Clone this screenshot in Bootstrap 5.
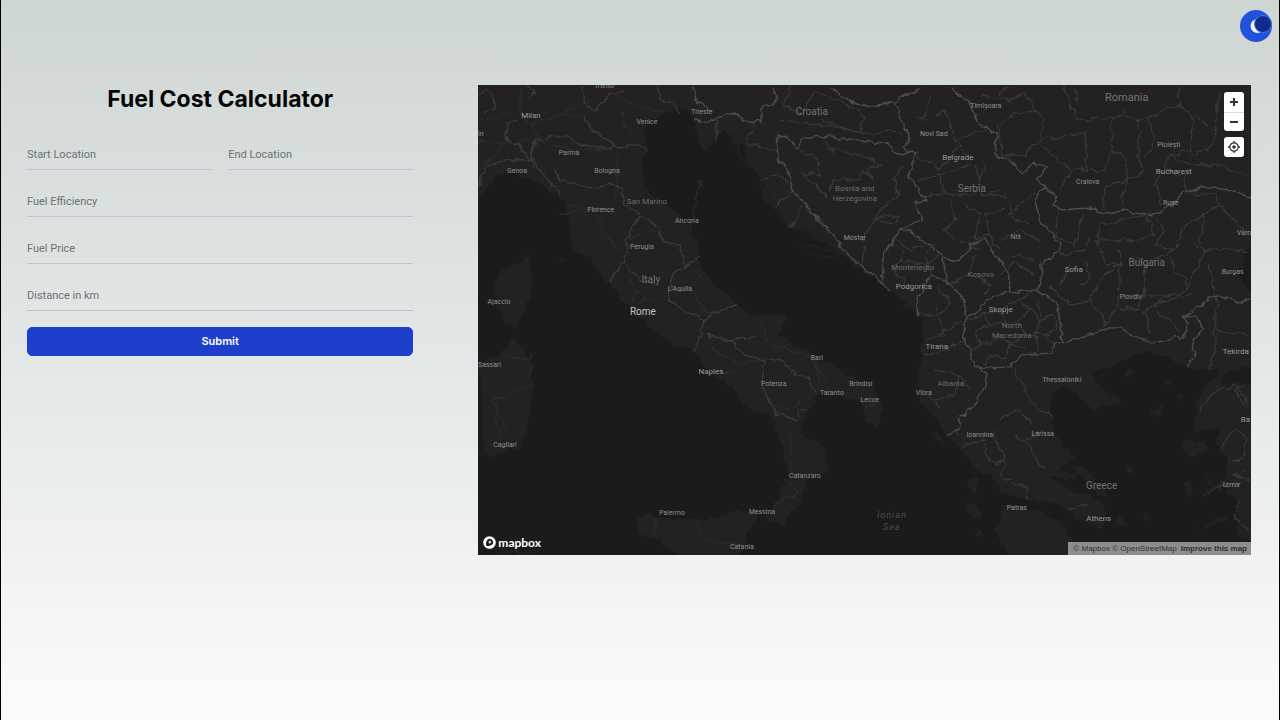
<!DOCTYPE html>
<html lang="en">
<head>
<meta charset="utf-8">
<meta name="viewport" content="width=device-width, initial-scale=1">
<title>Fuel Cost Calculator</title>
<link href="https://cdn.jsdelivr.net/npm/bootstrap@5.3.0/dist/css/bootstrap.min.css" rel="stylesheet">
<style>
  body {
    font-family: Inter, "Liberation Sans", sans-serif;
    background: linear-gradient(#ced6d4, #e3e7e7 50%, #fafafa 97%) no-repeat #fafafa;
    border: solid #000;
    border-width: 0 1px;
  }
  .top-bar { padding: 10px 7px 0; height: 85px; }
  .theme-toggle { width: 32px; height: 32px; }
  .planner { padding: 0 28px 0 26px; display: grid; gap: 32px; }
  @media (min-width: 768px) {
    .planner { grid-template-columns: 1fr 2fr; gap: 65px; }
  }
  .page-title { font-size: 23px; line-height: 28px; margin-bottom: 28px; font-weight: 700; color: #050707; }
  .fields { gap: 18px; }
  .form-floating > .line-input, .form-floating > .line-input:focus {
    height: 29px; min-height: 29px; padding: 0; font: 11px/28px Roboto, "Liberation Sans", sans-serif; color: #333b42;
    background: transparent; border: 0; border-bottom: 1px solid #bcc6cb; border-radius: 0; box-shadow: none;
  }
  .form-floating > .line-input:focus { border-color: #1f3ecb; }
  .form-floating > .line-label {
    height: 28px; padding: 0; border: 0; font: 11px/28px Roboto, "Liberation Sans", sans-serif; color: #6b7275;
  }
  .form-floating > .line-input:focus ~ .line-label,
  .form-floating > .line-input:not(:placeholder-shown) ~ .line-label { transform: translateY(-18px); }
  .btn-submit {
    --bs-btn-bg: #1f3ecb; --bs-btn-border-color: #1f3ecb; --bs-btn-color: #fff;
    --bs-btn-hover-bg: #1a35b0; --bs-btn-hover-color: #fff;
    height: 29px; margin-top: 16px; padding: 0; font-size: 11px; font-weight: 600; border-radius: 5px;
  }
  .map-view { aspect-ratio: 773 / 470; background: #1b1b1b; }
  .map-tools { top: 7px; right: 7px; gap: 6px; }
  .tool-group { width: 20px; border-radius: 3px; }
  .tool-group button { height: 20px; }
  .tool-group button + button { height: 19px; border-top: 1px solid #ddd !important; }
  .map-brand { left: 5px; bottom: 4px; gap: 2px; font: 700 12px/16px Lato, sans-serif; }
  .map-credit {
    right: 0; bottom: 0; height: 13px; padding: 0 4px 0 5px; gap: 4px;
    background: #8d8d8d; font: 8px/13px "Liberation Sans", sans-serif;
  }
  .map-credit a { color: #303030; }
  .map-svg text { font-family: Roboto, "Noto Sans", sans-serif; text-anchor: middle; }
  .city { font-size: 7px; fill: #8e8e8e; }
  .city-lg { font-size: 8px; fill: #999; }
  .capital { font-size: 10px; fill: #c0c0c0; }
  .land-name { font-size: 8px; fill: #6c6c6c; }
  .land-name-lg { font-size: 10px; fill: #727272; }
  .map-svg .from-start { text-anchor: start; }
  .sea-name { font-size: 9px; fill: #4d4d4d; font-style: italic; letter-spacing: 1px; }
</style>
</head>
<body class="min-vh-100">
<header class="top-bar d-flex justify-content-end align-items-start">
  <button type="button" class="theme-toggle btn p-0 border-0 rounded-circle d-flex" aria-label="Toggle dark mode">
    <svg width="32" height="32" viewBox="0 0 32 32" aria-hidden="true">
      <circle cx="16" cy="16" r="16" fill="#2451d9"/>
      <circle cx="17.500" cy="16" r="7" fill="#f2f6ff"/>
      <circle cx="23" cy="14" r="8.500" fill="#102b8d" stroke="#4775df"/>
    </svg>
  </button>
</header>

<main class="planner">
  <section>
    <h1 class="page-title text-center">Fuel Cost Calculator</h1>
    <form>
      <div class="fields d-flex flex-column">
        <div class="d-flex gap-3">
          <div class="form-floating w-50">
            <input id="start" class="form-control line-input" type="text" placeholder=" ">
            <label class="line-label" for="start">Start Location</label>
          </div>
          <div class="form-floating w-50">
            <input id="end" class="form-control line-input" type="text" placeholder=" ">
            <label class="line-label" for="end">End Location</label>
          </div>
        </div>
        <div class="form-floating">
          <input id="eff" class="form-control line-input" type="text" placeholder=" ">
          <label class="line-label" for="eff">Fuel Efficiency</label>
        </div>
        <div class="form-floating">
          <input id="price" class="form-control line-input" type="text" placeholder=" ">
          <label class="line-label" for="price">Fuel Price</label>
        </div>
        <div class="form-floating">
          <input id="dist" class="form-control line-input" type="text" placeholder=" ">
          <label class="line-label" for="dist">Distance in km</label>
        </div>
      </div>
      <button type="submit" class="btn btn-submit w-100">Submit</button>
    </form>
  </section>

  <section class="map-view position-relative overflow-hidden" aria-label="Map">
    <svg class="map-svg d-block w-100 h-100" viewBox="478 85 773 470" preserveAspectRatio="xMidYMid slice">
      <defs>
        <filter id="rough" filterUnits="userSpaceOnUse" x="470" y="77" width="790" height="486" color-interpolation-filters="sRGB">
          <feTurbulence type="fractalNoise" baseFrequency="0.11" numOctaves="2" seed="4"/>
          <feDisplacementMap in="SourceGraphic" scale="8" xChannelSelector="R" yChannelSelector="G"/>
        </filter>
      </defs>
      <g filter="url(#rough)">
        <g fill="#222">
          <!-- mainland: Italy, the Balkans, Greece and western Turkey -->
          <path d="M470 77V203L480 197 488 186 497 177 507 172 517 174 530 180 545 187 557 194 563 202 567 215 570 232 572 245 575 251 588 257 597 268 604 280 615 288 622 302 632 312 645 320 650 328 665 338 674 346 690 347 695 350 702 362 712 370 715 378 723 381 735 386 738 397 743 405 752 412 768 413 775 425 783 448 787 467 790 480 783 487 777 490 780 495 773 507 767 518 768 523 783 525 790 512 802 503 804 485 808 477 828 472 826 458 825 447 810 440 801 432 805 418 815 400 820 395 840 397 857 400 863 407 867 422 877 427 880 415 883 408 880 400 873 387 857 378 843 373 830 363 810 353 780 337 780 330 789 318 787 314 763 315 750 313 737 305 717 287 703 272 700 260 697 240 693 237 683 218 670 208 652 195 643 180 642 160 647 152 647 140 642 130 657 117 673 110 690 110 694 120 700 143 705 153 717 137 725 130 733 140 745 147 747 163 760 177 763 197 773 208 787 227 807 233 833 247 847 260 863 272 880 283 897 297 912 310 922 320 923 340 923 357 918 382 920 402 933 413 943 432 960 448 977 472 993 477 1000 492 1027 500 1053 503 1070 512 1080 520 1100 530 1107 512 1097 498 1080 495 1050 477 1080 480 1075 474 1057 470 1077 458 1063 445 1053 432 1050 415 1053 393 1067 387 1080 397 1092 409 1117 403 1100 387 1093 373 1117 363 1140 352 1170 357 1187 368 1220 370 1210 383 1197 403 1193 432 1220 428 1217 445 1230 465 1223 480 1203 493 1223 488 1237 498 1240 515 1237 535 1260 550V77Z"/>
          <path d="M1003 505 1000 522 995 532 1007 552V563H1075L1070 538 1063 523 1040 512 1020 507Z"/>
          <path d="M528 247 531 277 530 297 523 313 515 330 503 320 498 307 495 283 500 272 520 262 527 258Z"/>
          <path d="M513 338 525 350 533 370 530 407 529 420 522 448 503 452 493 458 485 452 482 415 479 360 500 355Z"/>
          <path d="M637 518 647 512 657 518 690 520 717 518 737 512 762 512 748 532 745 542 740 560H690L670 550 653 538 640 535Z"/>
          <path d="M970 478l8-2-2 18-6-4zM965 503l12 2 4 14-9-1zM974 529l9 6-5 2zM932 430l8 4 5 12-7-4zM1072 466l12 2 22 24 6 8-14-6zM1112 520l10-4 5 10-8-2zM1140 512l8 4 0 8zM1126 465l7 4 2 6-6-2zM1150 411l13-4-2 9-8 0zM1126 369l8 2-2 9-7-3zM1164 382l10 0-4 4zM1176 398l8-5-1 8zM1183 442l20-2 6 10-16 8-10-6zM1184 484l7-3 2 12-6 4zM1206 477l7 4-2 7zM1196 531l20-12 14-2-22 12zM555 258l10 1-3 4zM1108 393l10 4 4 8-9-5z"/>
          <path d="M733 137 745 165M760 177 785 222M800 227 832 243M800 245 845 252M806 254 840 260M500 553 535 553" stroke="#202020" stroke-width="3"/>
        </g>
        <g fill="#1b1b1b">
          <path d="M1223 375 1235 371 1260 363V388L1235 382 1223 385Z"/>
          <path d="M1260 240 1246 250 1243 268 1240 276 1247 288 1260 298Z"/>
        </g>
        <!-- roads and minor boundaries in Italy and on the islands -->
        <g fill="none" stroke="#2d2d2d" stroke-width="1.2">
          <path d="M478 142 515 143 530 141M520 87 520 110 530 125 560 115 585 118 600 135M550 145 580 150 640 146M617 155 617 195M605 90 640 107 665 112M620 108 630 135M560 215 600 208M598 215 605 235 620 250M567 205 615 212M640 235 625 240M505 355 530 360M495 400 530 385M495 400 500 440M530 355 532 375M492 395 505 430M695 520 705 540 740 545M655 520 655 535M478 120 510 115M530 125 545 145M560 115 590 100M480 170 510 140M700 180 690 230M650 230 680 250"/>
          <path d="M700 275 690 290 710 315M630 280 645 300 660 300M640 290C625 300 640 310 645 295M712 350 740 365 765 358M735 370 720 375M760 320 770 345 790 350 815 360 830 395M815 360 820 385M790 430 792 470M865 410 875 400M770 400 790 410 800 400M785 480 800 492 775 505"/>
        </g>
        <!-- regional boundaries in the Balkans -->
        <g fill="none" stroke="#393939" stroke-width="1.2">
          <path d="M790 87 785 105 800 115 815 92 850 105 865 118 860 130 780 120M820 120 870 135 890 130 905 132M835 150 870 157 880 165 868 170 875 180 862 170 862 180 835 180 830 190M800 150 818 160 820 175 802 173 828 198M903 165 893 180 900 195 880 210 875 218 900 215 895 222 875 220 862 240M745 142 755 125M745 142 775 150M760 180 780 175 795 190 780 200 775 207M800 205 798 220 788 228M825 140 835 155"/>
          <path d="M915 115 925 120 930 95M935 115 945 110 955 140 960 145 940 170 918 155M955 140 985 130M960 145 970 165 940 175M918 180 940 175 945 195 925 197M945 195 975 195 985 165M950 198 955 220 945 230 955 240M965 205 980 215 975 240 990 235 985 215 1005 210M975 165 983 195 1000 190M990 195 1010 200 1015 220 1030 225M1000 240 1020 230 1040 240M1010 215 1030 195 1035 195"/>
          <path d="M998 125 1015 115 1035 110 1043 120 1040 140 1025 155 1002 155 998 125M980 95 1010 100 1025 93 1035 110M1040 140 1085 133 1088 170 1072 170 1060 190M1040 145 1055 158 1072 170M1063 87 1077 120 1120 117 1125 110M1077 87 1077 100M1112 118 1112 150 1105 172 1090 170M1112 150 1125 157 1128 180 1105 185 1105 210M1125 115 1140 122 1137 155 1145 170 1128 180 1122 205M1140 122 1165 110 1180 105 1195 120 1190 150 1170 155M1150 118 1155 140 1145 160M1180 87 1180 105M1195 115 1215 130 1210 150 1190 155M1220 90 1215 130M1170 155 1165 170 1185 175 1187 195M1190 165 1220 165 1250 177M1190 165 1170 155M1165 170 1155 185 1160 205M1060 210 1055 235 1075 245 1083 215M1100 225 1098 245M1100 225 1145 215 1155 235 1140 240 1100 240"/>
          <path d="M1155 218 1165 230 1155 245 1175 250 1185 225 1205 215 1220 205 1215 195 1190 195M1205 215 1200 245M1220 205 1240 225 1250 235M1060 255 1085 250 1090 240M1095 240 1107 265 1120 265 1120 250M1048 285 1070 305 1090 300 1105 275 1120 265 1118 305 1107 325M1070 262 1060 290M1087 260 1090 280 1080 285M1090 300 1100 315 1107 325M1120 308 1140 310 1145 290 1145 265 1135 258M1145 265 1165 255 1180 245M1145 295 1180 295 1190 285 1175 270 1170 255M1190 285 1205 250 1195 245M1205 250 1230 250 1250 252M1210 265 1215 295M1145 310 1150 335M1155 310 1175 325 1180 335M1195 295 1165 300 1145 310M1217 295 1215 350 1210 368M1217 330 1250 335M1220 385 1200 410M1245 385 1235 390 1245 405M1210 395 1235 385 1250 405"/>
          <path d="M862 265 865 245M895 240 910 250 925 245M900 260 925 265 940 255M905 250 895 270 910 290M935 245 925 255 930 275M937 285 950 305 940 315 920 315M937 305 945 335 925 340M937 335 962 322M925 355 945 350 963 340M935 370 960 375 955 395 935 400M975 255 970 275 947 285M972 275 990 285 985 295M980 250 960 240M930 395 940 410M960 375 970 390M1000 95 1010 87M1005 260 1020 255 1035 262M1000 275 1015 262 1035 275M1000 250 990 235"/>
          <path d="M970 320 985 315 990 325 975 330 980 345 970 350M985 315 1000 310 1005 325 990 325M1005 325 1020 322 1025 335 1010 345 1000 335 990 345 980 345M1020 322 1030 310 1040 320 1035 335 1025 335M1030 310 1020 300 1010 305 1000 310M1040 320 1055 315 1058 330 1045 335 1035 335 1040 350M1025 350 1010 345 1005 360 990 355 985 365M1040 300 1040 320M1045 335 1055 345M1020 300 1030 295"/>
          <path d="M960 448 985 440 985 455 995 465 1005 460M995 430 998 445 1005 460 1003 475 1015 485 1027 485 1028 500M1000 420 1020 410 1032 425M1012 368 1025 390 1033 405 1045 412 1052 418M1015 435 1030 445 1035 460 1045 470M1025 440 1040 432M1070 510 1080 505 1090 505M1220 450 1235 430 1245 435 1245 455 1228 465M1245 470 1235 475 1250 480M1205 495 1225 485M1240 500 1235 520 1250 530"/>
        </g>
        <!-- Italian regional boundaries -->
        <g fill="none" stroke="#3d3d3d" stroke-width="1.2">
          <path d="M478 92 492 92 495 110 485 112M525 87 535 92 530 97M520 120 508 122 507 140 520 145 533 165 531 158 537 140 560 135 580 145 610 148 640 145 646 152M582 87 585 105 595 110 610 95 623 92M585 115 588 125 615 148M655 87 660 100 675 105 677 115M478 187 488 165 510 160 533 160 540 170 560 195M553 168 562 180 590 188 612 183 622 190 625 205 640 215 630 230 627 243 625 260 610 282M640 215 655 225 665 242 680 245 685 265 672 275 670 300 690 315 705 320 715 313 735 305M685 265 700 258M627 265 638 280 655 285M703 320 700 340 694 350M705 335 730 340 755 337M730 340 745 355 765 360 762 385 772 405 778 415 797 420 800 410 808 410M765 357 780 360 795 375 810 380 815 395M717 120 717 140"/>
        </g>
        <!-- country borders -->
        <g fill="none" stroke="#4d4d4d" stroke-width="1.4">
          <path d="M693 120 707 121 717 118 733 112 743 120 753 123 762 122 762 108 777 100 773 87M693 87 697 100 710 110"/>
          <path d="M832 87 843 97 860 105 880 105 897 100 913 93 922 87M897 100 900 120 910 133 907 140 907 152 902 155 893 152 888 143 873 142 847 140 820 135 803 140 797 148 785 135 779 137 777 157 790 173 793 190 810 210 830 230 843 248 853 260 877 277 883 285 890 290"/>
          <path d="M907 152 916 153 908 177 927 200 913 203 923 220 902 228 892 243 883 260 883 282M902 228 923 240 943 257 960 262 973 243 985 240 1000 262 1010 275 1010 292M943 257 947 282"/>
          <path d="M950 87 970 103 977 123 997 135 995 155 1010 160 1023 173 1033 163 1047 168 1038 177 1045 187 1058 197 1053 205 1062 210 1087 208 1107 213 1123 210 1153 215 1170 207 1183 193 1207 187 1230 190 1255 199"/>
          <path d="M1045 187 1035 200 1040 220 1060 243 1060 250 1040 265 1042 280 1037 290 1058 305 1063 341 1055 343 1053 353 1023 355 1010 367 990 368 977 367 963 337 967 317 977 313 987 300 1010 292 1037 290"/>
          <path d="M1063 342 1083 338 1107 328 1123 328 1133 337 1153 342 1183 337 1187 327 1183 317 1193 312 1203 302 1217 295 1238 302 1255 297M1183 317 1197 317 1205 330 1193 340 1195 353 1187 368"/>
          <path d="M918 317 917 300 930 275 947 282 963 297 967 317M977 367 987 373 985 387 973 407 960 418 958 433 947 434"/>
        </g>
      </g>
      <g class="city">
        <text x="604" y="88">Trento</text><text x="647" y="124">Venice</text><text x="702" y="114">Trieste</text>
        <text x="569" y="155">Parma</text><text x="607" y="173">Bologna</text><text x="517" y="173">Genoa</text>
        <text class="from-start" x="478" y="136">in</text><text x="601" y="212">Florence</text><text x="687" y="223">Ancona</text>
        <text x="642" y="249">Perugia</text><text x="680" y="291">L'Aquila</text><text x="499" y="304">Ajaccio</text>
        <text class="from-start" x="478" y="367">Sassari</text><text x="505" y="447">Cagliari</text><text x="672" y="515">Palermo</text>
        <text x="762" y="514">Messina</text><text x="742" y="549">Catania</text><text x="805" y="478">Catanzaro</text>
        <text x="774" y="386">Potenza</text><text x="817" y="360">Bari</text><text x="861" y="386">Brindisi</text>
        <text x="832" y="395">Taranto</text><text x="870" y="402">Lecce</text><text x="924" y="395">Vlora</text>
        <text x="855" y="240">Mostar</text><text x="934" y="136">Novi Sad</text><text x="986" y="108">Timișoara</text>
        <text x="1169" y="147">Ploiești</text><text x="1088" y="184">Craiova</text><text x="1171" y="205">Ruse</text>
        <text x="1016" y="239">Niš</text><text x="1131" y="299">Plovdiv</text><text x="1233" y="274">Burgas</text>
        <text class="from-start" x="1237" y="235">Varn</text><text x="1062" y="382">Thessaloniki</text><text x="980" y="437">Ioannina</text>
        <text x="1043" y="436">Larissa</text><text x="1017" y="510">Patras</text>
      </g>
      <g class="city-lg">
        <text x="531" y="118">Milan</text><text x="711" y="374">Naples</text><text x="958" y="160">Belgrade</text>
        <text x="1174" y="174">Bucharest</text><text x="1074" y="272">Sofia</text><text x="1001" y="312">Skopje</text>
        <text x="914" y="289">Podgorica</text><text x="937" y="349">Tirana</text><text x="1099" y="521">Athens</text>
        <text x="1232" y="487">Izmir</text><text class="from-start" x="1223" y="354">Tekirda</text><text class="from-start" x="1241" y="422">Ba</text>
      </g>
      <text class="capital" x="643" y="315">Rome</text>
      <g class="land-name">
        <text x="647" y="204">San Marino</text><text x="855" y="191">Bosnia and</text><text x="855" y="201">Herzegovina</text>
        <text x="913" y="270">Montenegro</text><text x="981" y="277">Kosovo</text><text x="1012" y="328">North</text>
        <text x="1012" y="338">Macedonia</text><text x="951" y="386">Albania</text>
      </g>
      <g class="land-name-lg">
        <text x="651" y="283">Italy</text><text x="1127" y="101" font-size="11">Romania</text><text x="1102" y="489">Greece</text>
        <text x="812" y="115">Croatia</text><text x="972" y="192">Serbia</text><text x="1147" y="266">Bulgaria</text>
      </g>
      <g class="sea-name"><text x="892" y="518">Ionian</text><text x="892" y="530">Sea</text></g>
    </svg>

    <div class="map-tools position-absolute d-flex flex-column">
      <div class="tool-group bg-white overflow-hidden d-flex flex-column">
        <button type="button" class="btn p-0 border-0 rounded-0 d-flex align-items-center justify-content-center" aria-label="Zoom in">
          <svg width="8" height="8" viewBox="0 0 8 8"><path d="M4 0V8M0 4H8" stroke="#333" stroke-width="2"/></svg>
        </button>
        <button type="button" class="btn p-0 border-0 rounded-0 d-flex align-items-center justify-content-center" aria-label="Zoom out">
          <svg width="8" height="8" viewBox="0 0 8 8"><path d="M0 4H8" stroke="#333" stroke-width="2"/></svg>
        </button>
      </div>
      <div class="tool-group bg-white overflow-hidden d-flex flex-column">
        <button type="button" class="btn p-0 border-0 rounded-0 d-flex align-items-center justify-content-center" aria-label="Find my location">
          <svg width="12" height="12" viewBox="0 0 12 12"><circle cx="6" cy="6" r="4.200" fill="none" stroke="#333" stroke-width="1.200"/><circle cx="6" cy="6" r="1.800" fill="#333"/><path d="M6 0V2M6 10V12M0 6H2M10 6H12" stroke="#333" stroke-width="1.300"/></svg>
        </button>
      </div>
    </div>
    <a href="#" class="map-brand position-absolute d-flex align-items-center text-white text-decoration-none">
      <svg width="13" height="13" viewBox="0 0 13 13" aria-hidden="true"><circle cx="6.500" cy="6.500" r="6.300" fill="#fff"/><path d="M3.200 9.800C2.700 7 3.200 5 4.400 3.900A3.300 3.300 0 0 1 9.100 8.600C8 9.800 6 10.300 3.200 9.800Z" fill="#1b1b1b"/><path d="M6.900 4.200 7.500 5.500 8.800 6.100 7.500 6.700 6.900 8 6.300 6.700 5 6.100 6.300 5.500Z" fill="#fff"/></svg>
      <span>mapbox</span>
    </a>
    <div class="map-credit position-absolute d-flex">
      <span><a href="#" class="text-decoration-none">© Mapbox</a> <a href="#" class="text-decoration-none">© OpenStreetMap</a></span>
      <a href="#" class="text-decoration-none fw-bold">Improve this map</a>
    </div>
  </section>
</main>
<script src="https://cdn.jsdelivr.net/npm/bootstrap@5.3.0/dist/js/bootstrap.bundle.min.js"></script>
</body>
</html>
